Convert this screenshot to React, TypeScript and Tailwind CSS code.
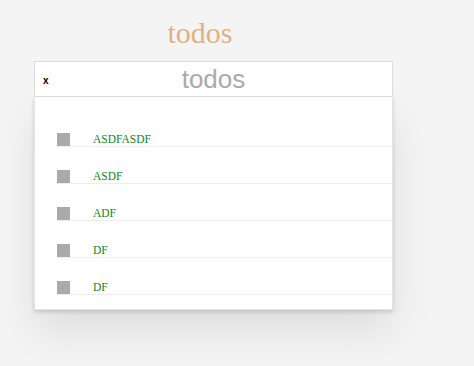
const todos = ["ASDFASDF", "ASDF", "ADF", "DF", "DF"];

function TodoRow({ label }: { label: string }) {
  return (
    <li className="flex h-[37px] items-end border-b border-[#ededed]">
      <div className="flex items-end">
        <span className="block h-[13px] w-[13px] bg-[#aaaaaa]" />
        <span className="ml-[23px] text-[11.5px] leading-[13px] text-[#0f8526]">{label}</span>
      </div>
    </li>
  );
}

export default function App() {
  return (
    <div className="min-h-[366px] w-full bg-[#f4f4f4] pt-[18px] font-['Liberation_Serif',serif]">
      <h1 className="w-[400px] text-center text-[30px] font-normal leading-none text-[#dcb386]">todos</h1>

      <div className="ml-[34px] mt-[13px] w-[359px]">
        {/* new todo input */}
        <div className="relative">
          <input
            className="block h-[36px] w-full border border-[#dcdcdc] bg-white text-center font-['Liberation_Sans',sans-serif] text-[26px] text-[#555] outline-none placeholder:text-[#aaaaaa]"
            placeholder="todos"
          />
          <span className="absolute left-[9px] top-[14px] font-['Liberation_Sans',sans-serif] text-[10px] font-semibold leading-[12px] text-black">
            x
          </span>
        </div>

        {/* list */}
        <div className="border border-t-0 border-[#e4e4e4] bg-white pb-[14px] pl-[22px] pt-[13px] shadow-[0_2px_4px_rgba(0,0,0,0.15),0_22px_40px_rgba(0,0,0,0.09)]">
          <ul>
            {todos.map((t, i) => (
              <TodoRow key={i} label={t} />
            ))}
          </ul>
        </div>
      </div>
    </div>
  );
}
